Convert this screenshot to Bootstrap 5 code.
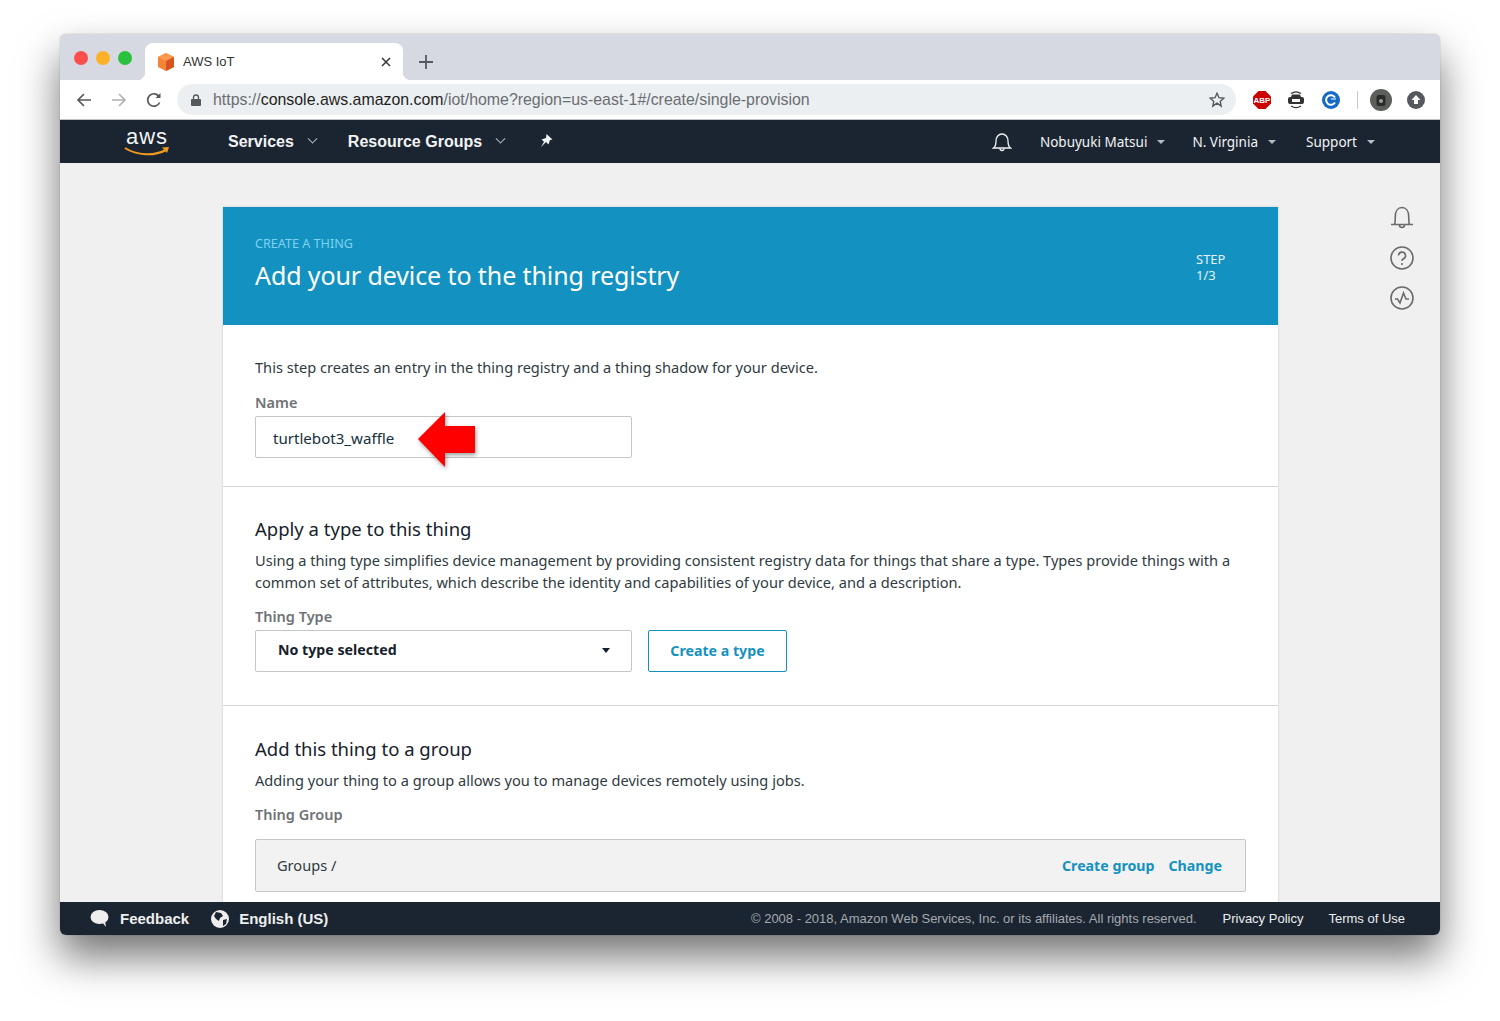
<!DOCTYPE html>
<html lang="en">
<head>
  <meta charset="UTF-8" />
  <title>AWS IoT</title>
  <link href="https://cdn.jsdelivr.net/npm/bootstrap@5.3.3/dist/css/bootstrap.min.css" rel="stylesheet" />
  <style>
    body { background: #fff; font-family: "Noto Sans", sans-serif; }
    .desk { height: 1021px; padding: 34px 60px 0; overflow: hidden; }
    .win { width: 1380px; height: 901px; border-radius: 6px; overflow: hidden; box-shadow: 0 22px 42px rgba(0,0,0,.55), 0 0 1px rgba(0,0,0,.5); }
    .tabstrip { height: 46px; background: #d6d9e1; padding-left: 14px; }
    .dot { width: 14px; height: 14px; border-radius: 50%; }
    .tabx { position: relative; width: 258px; height: 37px; margin-left: 13px; background: #fff; border-radius: 8px 8px 0 0; padding: 0 12px 0 11px; font: 13px "Liberation Sans", sans-serif; color: #333; }
    .tabx::before, .tabx::after { content: ""; position: absolute; bottom: 0; width: 8px; height: 8px; }
    .tabx::before { left: -8px; background: radial-gradient(circle at 0 0, transparent 8px, #fff 8.5px); }
    .tabx::after { right: -8px; background: radial-gradient(circle at 100% 0, transparent 8px, #fff 8.5px); }
    .toolbar { height: 40px; background: #fff; border-bottom: 1px solid #bfc2c7; }
    .urlbar { width: 1059px; height: 31px; margin-left: 15px; background: #eceff1; border-radius: 16px; font: 15.9px "Liberation Sans", sans-serif; color: #6a6d72; padding: 0 11px 0 14px; }
    .urlbar b { font-weight: 400; color: #1d1f22; }
    .awsnav { height: 43px; background: #1b2532; color: #f2f3f3; }
    .logo-box { width: 168px; padding-left: 64px; }
    .navbold { font: 700 16px "Liberation Sans", sans-serif; }
    .navthin { font: 13.5px "Noto Sans", sans-serif; }
    .caret-d { display: inline-block; width: 7px; height: 7px; border-right: 1.5px solid #b8bcc1; border-bottom: 1.5px solid #b8bcc1; transform: rotate(45deg) translate(-2px,-2px); margin-left: 15px; }
    .caret-s { width: 0; height: 0; border-left: 4px solid transparent; border-right: 4px solid transparent; border-top: 4px solid #b8bcc1; margin-left: 10px; }
    .stage { height: 739px; background: #f0f0f0; overflow: hidden; padding-top: 44px; padding-left: 163px; }
    .sheet { width: 1055px; background: #fff; box-shadow: 0 0 2px rgba(0,0,0,.2); height: 800px; }
    .sheet-head { height: 118px; background: #1391c1; color: #fff; padding: 28px 53px 0 32px; }
    .crumb { font-size: 12.6px; line-height: 17px; color: #7fd3f0; }
    .sheet-title { font-size: 25px; line-height: 34px; font-weight: 400; margin: 6px 0 0; letter-spacing: -.1px; }
    .stepbox { font-size: 13px; line-height: 16px; color: #e3f2f9; width: 29px; margin-top: 16px; }
    .part { padding: 0 32px; border-bottom: 1px solid #d5d5d5; font-size: 14.6px; color: #2f3a42; }
    .p1 { height: 162px; padding-top: 31px; }
    .p2 { height: 219px; padding-top: 29px; }
    .p3 { padding-top: 30px; border: 0; }
    .part p { margin: 0; line-height: 22px; }
    .part h2 { font-size: 18.5px; line-height: 26px; font-weight: 400; margin: 0 0 7px; color: #16212b; }
    .lbl { font-size: 14.5px; font-weight: 600; color: #6f7276; line-height: 20px; margin: 13px 0 4px; }
    .namebox { position: relative; width: 377px; height: 42px; border: 1px solid #c4c6c8; border-radius: 2px; padding-left: 17px; line-height: 42px; color: #16303c; font-size: 15.1px; }
    .redarrow { position: absolute; left: 161px; top: -5px; filter: drop-shadow(1px 2px 2px rgba(0,0,0,.4)); }
    .selectbox { width: 377px; height: 42px; border: 1px solid #c4c6c8; border-radius: 2px; padding: 0 21px 2px 22px; font-weight: 700; color: #16212b; font-size: 14.2px; }
    .tri { width: 0; height: 0; border-left: 4.5px solid transparent; border-right: 4.5px solid transparent; border-top: 5px solid #16212b; }
    .typebtn { width: 139px; height: 42px; margin-left: 16px; border: 1px solid #1391c1; border-radius: 2px; color: #1391c1; font-weight: 700; font-size: 14.2px; background: #fff; padding: 0; }
    .groupbox { height: 53px; margin-top: 15px; background: #f2f2f2; border: 1px solid #c4c6c8; border-radius: 2px; padding: 0 23px 0 21px; }
    .groupbox a { color: #1391c1; font-weight: 700; font-size: 14.2px; text-decoration: none; margin-left: 14px; }
    .rail { width: 40px; margin-left: 104px; margin-top: -1px; gap: 16px; }
    .awsfoot { height: 33px; background: #1b2532; color: #eee; padding: 0 35px 0 30px; font: 13px "Liberation Sans", sans-serif; }
    .awsfoot b { font-size: 15px; }
    .awsfoot .legal { color: #a5a9ad; margin-right: 26px; }
  </style>
</head>
<body>
  <div class="desk">
  <div class="win d-flex flex-column">
    <!-- browser chrome -->
    <div class="tabstrip d-flex align-items-end">
      <div class="d-flex gap-2 align-self-start" style="margin-top:17px">
        <div class="dot" style="background:#fc4f4d"></div>
        <div class="dot" style="background:#fdb126"></div>
        <div class="dot" style="background:#2ac13e"></div>
      </div>
      <div class="tabx d-flex align-items-center">
        <svg width="20" height="20" viewBox="0 0 20 20"><path d="M10 1l8 4v10l-8 4-8-4V5z" fill="#f58536"/><path d="M2 5l8 4 8-4-8-4z" fill="#fb9a4e"/><path d="M10 9l8-4v10l-8 4z" fill="#d9531e"/></svg>
        <span class="flex-grow-1" style="margin-left:7px">AWS IoT</span>
        <svg width="10" height="10" viewBox="0 0 10 10"><path d="M1 1l8 8M9 1l-8 8" stroke="#333" stroke-width="1.500"/></svg>
      </div>
      <svg class="align-self-center" style="margin:9px 0 0 16px" width="14" height="14" viewBox="0 0 14 14"><path d="M7 0v14M0 7h14" stroke="#55585d" stroke-width="1.800"/></svg>
    </div>
    <div class="toolbar d-flex align-items-center" style="padding-left:16px">
      <svg width="16" height="16" viewBox="0 0 16 16" fill="none" stroke="#55585d" stroke-width="1.700"><path d="M15 8H2M8 2L2 8l6 6"/></svg>
      <svg style="margin-left:19px" width="16" height="16" viewBox="0 0 16 16" fill="none" stroke="#b0b2b5" stroke-width="1.700"><path d="M1 8h13M8 2l6 6-6 6"/></svg>
      <svg style="margin-left:19px" width="16" height="16" viewBox="0 0 16 16" fill="none" stroke="#55585d" stroke-width="1.700"><path d="M13.600 10.500A6.200 6.200 0 1 1 13 4.400"/><path d="M14.500 1v5h-5z" fill="#55585d" stroke="none"/></svg>
      <div class="urlbar d-flex align-items-center">
        <svg width="10" height="12" viewBox="0 0 10 12"><rect y="5" width="10" height="7" rx="1" fill="#55585d"/><path d="M2.500 5V3.500a2.500 2.500 0 0 1 5 0V5" fill="none" stroke="#55585d" stroke-width="1.300"/></svg>
        <span class="flex-grow-1" style="margin-left:12px">https://<b>console.aws.amazon.com</b>/iot/home?region=us-east-1#/create/single-provision</span>
        <svg width="16" height="16" viewBox="0 0 16 16"><path d="M8 1.300l2 4.400 4.800.5-3.600 3.200 1 4.700L8 11.200l-4.200 2.900 1-4.700L1.200 6.200l4.800-.5z" fill="none" stroke="#55585d" stroke-width="1.400"/></svg>
      </div>
      <svg style="margin-left:17px" width="18" height="18" viewBox="0 0 18 18"><path d="M5.500 0h7L18 5.500v7L12.500 18h-7L0 12.500v-7z" fill="#c00"/><text x="9" y="12" text-anchor="middle" font-family="Liberation Sans" font-size="8" font-weight="700" fill="#fff">ABP</text></svg>
      <svg style="margin-left:16px" width="18" height="18" viewBox="0 0 18 18"><rect x="1" y="6" width="16" height="7" rx="2" fill="#333"/><path d="M4 6l1-2.500h8L14 6z" fill="#333"/><path d="M4 15c3 2 7 2 10 0M4 2.500c3-2 7-2 10 0" fill="none" stroke="#333" stroke-width="1.300"/><rect x="5" y="8" width="8" height="3" fill="#fff"/></svg>
      <svg style="margin-left:17px" width="18" height="18" viewBox="0 0 18 18"><circle cx="9" cy="9" r="9" fill="#1469c7"/><path d="M13 11.500A4.800 4.800 0 1 1 13 6.500" fill="none" stroke="#fff" stroke-width="2"/><path d="M9 8.500h5v-1H9z" fill="#fff"/></svg>
      <div style="width:1px;height:18px;background:#c8cacc;margin:0 12px 0 17px"></div>
      <svg width="22" height="22" viewBox="0 0 22 22"><circle cx="11" cy="11" r="11" fill="#5c5f5a"/><rect x="6.500" y="6" width="9" height="11" rx="2" fill="#2a2c2b"/><circle cx="11" cy="12" r="2" fill="#9a9c98"/></svg>
      <svg style="margin-left:15px" width="18" height="18" viewBox="0 0 18 18"><circle cx="9" cy="9" r="9" fill="#55585d"/><path d="M9 4l4.500 5H11v4H7V9H4.500z" fill="#fff"/></svg>
    </div>
    <!-- aws console nav -->
    <div class="awsnav d-flex align-items-center">
      <div class="logo-box">
        <svg width="46" height="38" viewBox="0 0 46 38" class="d-block">
          <text x="2" y="21" font-family="Liberation Sans" font-size="22" fill="#f2f3f3" textLength="41">aws</text>
          <path d="M1 25c12 8 30 8 41 2" fill="none" stroke="#f09a22" stroke-width="2"/>
          <path d="M38 24.500l7-.5-2 6z" fill="#f09a22"/>
        </svg>
      </div>
      <span class="navbold">Services</span><span class="caret-d"></span>
      <span class="navbold" style="margin-left:32px">Resource Groups</span><span class="caret-d"></span>
      <svg style="margin-left:35px" width="14" height="15" viewBox="0 0 14 15"><path d="M7.500 0l6 5.500-2.500.5-1.500 4.500-2.500-2.500L2 13l3-5.200L2.500 5.500 7 4z" fill="#f2f3f3"/></svg>
      <div class="ms-auto d-flex align-items-center" style="padding-right:65px">
        <svg width="20" height="20" viewBox="0 0 20 20" fill="none" stroke="#f2f3f3" stroke-width="1.300"><path d="M1.500 16h17c-2-1.500-2.500-3-2.500-7 0-4-2.500-7-6-7s-6 3-6 7c0 4-.5 5.500-2.500 7z"/><path d="M8 16.500a2 2 0 0 0 4 0"/></svg>
        <span class="navthin" style="margin-left:28px">Nobuyuki Matsui</span><span class="caret-s"></span>
        <span class="navthin" style="margin-left:27px">N. Virginia</span><span class="caret-s"></span>
        <span class="navthin" style="margin-left:30px">Support</span><span class="caret-s"></span>
      </div>
    </div>
    <!-- page -->
    <div class="stage d-flex align-items-start">
      <div class="sheet flex-shrink-0">
        <div class="sheet-head d-flex justify-content-between">
          <div>
            <div class="crumb">CREATE A THING</div>
            <h1 class="sheet-title">Add your device to the thing registry</h1>
          </div>
          <div class="stepbox">STEP 1/3</div>
        </div>
        <div class="part p1">
          <p>This step creates an entry in the thing registry and a thing shadow for your device.</p>
          <div class="lbl" style="margin-top:14px">Name</div>
          <div class="namebox">turtlebot3_waffle
            <svg class="redarrow" width="62" height="56" viewBox="0 0 62 56"><path d="M1 27L28 0v14h30v27H28v14z" fill="#f00"/></svg>
          </div>
        </div>
        <div class="part p2">
          <h2>Apply a type to this thing</h2>
          <p>Using a thing type simplifies device management by providing consistent registry data for things that share a type. Types provide things with a common set of attributes, which describe the identity and capabilities of your device, and a description.</p>
          <div class="lbl">Thing Type</div>
          <div class="d-flex">
            <div class="selectbox d-flex align-items-center justify-content-between">No type selected<span class="tri"></span></div>
            <button class="typebtn" type="button">Create a type</button>
          </div>
        </div>
        <div class="part p3">
          <h2>Add this thing to a group</h2>
          <p>Adding your thing to a group allows you to manage devices remotely using jobs.</p>
          <div class="lbl">Thing Group</div>
          <div class="groupbox d-flex align-items-center justify-content-between">
            <span>Groups /</span>
            <span><a href="#">Create group</a><a href="#">Change</a></span>
          </div>
        </div>
      </div>
      <div class="rail d-flex flex-column align-items-center flex-shrink-0">
        <svg width="24" height="24" viewBox="0 0 24 24" fill="none" stroke="#6b6b6b" stroke-width="1.600"><path d="M1 18.500h22M4.500 18.500c.8-2 .8-4 .8-8C5.300 5 8 1.500 12 1.500s6.700 3.500 6.700 9c0 4 0 6 .8 8"/><path d="M9.500 19a2.500 2.500 0 0 0 5 0"/></svg>
        <svg width="24" height="24" viewBox="0 0 24 24" fill="none" stroke="#6b6b6b" stroke-width="1.600"><circle cx="12" cy="12" r="11"/><path d="M8.500 9.500A3.500 3.500 0 1 1 13 13c-.8.400-1 1-1 2"/><path d="M12 17v2"/></svg>
        <svg width="24" height="24" viewBox="0 0 24 24" fill="none" stroke="#6b6b6b" stroke-width="1.600"><circle cx="12" cy="12" r="11"/><path d="M5 13h2.500l2.500 4 3.500-10 2.500 6h3"/></svg>
      </div>
    </div>
    <!-- console footer -->
    <div class="awsfoot d-flex align-items-center">
      <svg width="19" height="17" viewBox="0 0 19 17"><ellipse cx="9.500" cy="7" rx="9" ry="7" fill="#eee"/><path d="M12 12l4 5-1-6z" fill="#eee"/></svg>
      <b style="margin-left:11px">Feedback</b>
      <svg style="margin-left:22px" width="18" height="18" viewBox="0 0 18 18"><circle cx="9" cy="9" r="9" fill="#eee"/><path d="M5 2l5 1 2 3-3 2-1 3-3-2-2-3zM12 10l4-1-1 5-3 2z" fill="#1b2532"/></svg>
      <b style="margin-left:10px">English (US)</b>
      <span class="ms-auto legal">© 2008 - 2018, Amazon Web Services, Inc. or its affiliates. All rights reserved.</span>
      <span>Privacy Policy</span>
      <span style="margin-left:25px">Terms of Use</span>
    </div>
  </div>
  </div>
  <script src="https://cdn.jsdelivr.net/npm/bootstrap@5.3.3/dist/js/bootstrap.bundle.min.js"></script>
</body>
</html>
